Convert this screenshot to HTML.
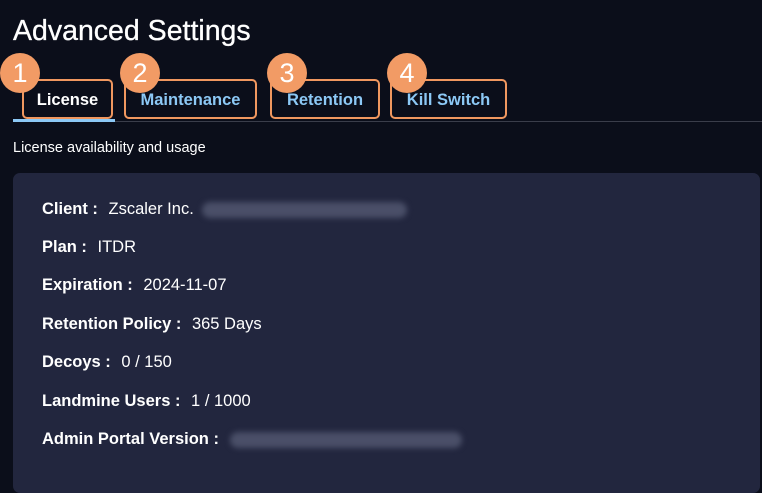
<!DOCTYPE html>
<html><head><style>
body{margin:0;width:762px;height:480px;background:#0b0e1a;font-family:"Liberation Sans",sans-serif;overflow:hidden;position:relative;color:#fff}
.t{position:absolute;left:13px;top:15px;font-size:28.5px;font-weight:normal;color:#fff;-webkit-text-stroke:0.3px #fff}
.line{position:absolute;left:13px;right:0;top:121px;height:1px;background:#3a3d4a}
.ul{position:absolute;left:13px;width:102px;top:119px;height:3px;background:#8cc8f5}
.tab{position:absolute;top:79px;border:2px solid #f0975f;border-radius:5px;font-size:16.5px;font-weight:bold;color:#8cc8f5;display:flex;align-items:center;justify-content:center;box-sizing:border-box;height:40px;padding-top:2px}
.b{position:absolute;width:40px;height:40px;border-radius:50%;background:#f29b65;color:#fff;font-size:27px;display:flex;align-items:center;justify-content:center;top:53px}
.sub{position:absolute;left:13px;top:140px;font-size:14.5px}
.card{position:absolute;left:13px;top:173px;width:747px;height:320px;background:#22263e;border-radius:7px}
.r{position:absolute;left:42px;font-size:16.5px}
.r b{margin-right:6px}
.blur{display:inline-block;vertical-align:middle;height:16px;background:#4a4f68;border-radius:8px;filter:blur(3px)}
</style></head><body>
<div class="t">Advanced Settings</div>
<div class="line"></div><div class="ul"></div>
<div class="tab" style="left:22px;width:91px;color:#fff">License</div>
<div class="tab" style="left:124px;width:133px">Maintenance</div>
<div class="tab" style="left:270px;width:110px">Retention</div>
<div class="tab" style="left:390px;width:117px">Kill Switch</div>
<div class="b" style="left:0">1</div>
<div class="b" style="left:120px">2</div>
<div class="b" style="left:267px">3</div>
<div class="b" style="left:387px">4</div>
<div class="sub">License availability and usage</div>
<div class="card"></div>
<div class="r" style="top:200px"><b>Client :</b> Zscaler Inc. <span class="blur" style="width:205px;margin-left:4px"></span></div>
<div class="r" style="top:238px"><b>Plan :</b> ITDR</div>
<div class="r" style="top:276px"><b>Expiration :</b> 2024-11-07</div>
<div class="r" style="top:315px"><b>Retention Policy :</b> 365 Days</div>
<div class="r" style="top:353px"><b>Decoys :</b> 0 / 150</div>
<div class="r" style="top:392px"><b>Landmine Users :</b> 1 / 1000</div>
<div class="r" style="top:430px"><b>Admin Portal Version :</b> <span class="blur" style="width:232px"></span></div>
</body></html>
